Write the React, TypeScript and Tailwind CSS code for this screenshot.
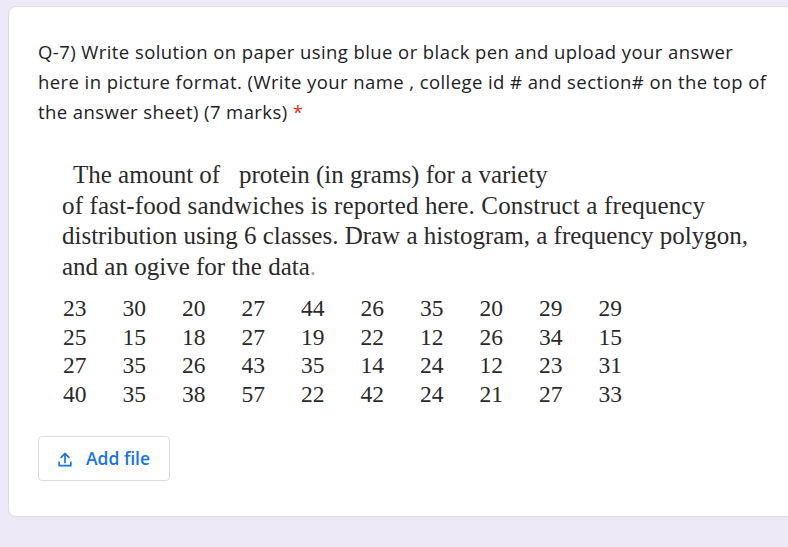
import React from "react";

const rows = [
  [23, 30, 20, 27, 44, 26, 35, 20, 29, 29],
  [25, 15, 18, 27, 19, 22, 12, 26, 34, 15],
  [27, 35, 26, 43, 35, 14, 24, 12, 23, 31],
  [40, 35, 38, 57, 22, 42, 24, 21, 27, 33],
];

export default function App() {
  return (
    <div className="w-[788px] h-[547px] bg-[#ede9f7] overflow-hidden pt-[6px] pl-[8px]">
      <div className="w-[800px] h-[511px] bg-white rounded-l-[8px] border border-[#dadce0] pl-[29px] pt-[30px]">
        <div
          className="text-[18.5px] leading-[30px] tracking-[0.42px] text-[#202124] whitespace-nowrap"
          style={{ fontFamily: "'Open Sans', Roboto, sans-serif" }}
        >
          <div>Q-7) Write solution on paper using blue or black pen and upload your answer</div>
          <div>here in picture format. (Write your name , college id # and section# on the top of</div>
          <div>
            the answer sheet) (7 marks) <span className="text-[#d93025]">*</span>
          </div>
        </div>
        <div
          className="mt-[33px] pl-[24px] text-[#2a2a2a] text-[25px] leading-[30.5px]"
          style={{ fontFamily: "'Liberation Serif', 'Times New Roman', serif" }}
        >
          <div className="pl-[11px] whitespace-pre">The amount of   protein (in grams) for a variety</div>
          <div className="whitespace-nowrap tracking-[0.15px]">of fast-food sandwiches is reported here. Construct a frequency</div>
          <div className="whitespace-nowrap">distribution using 6 classes. Draw a histogram, a frequency polygon,</div>
          <div>and an ogive for the data<span className="text-[#9a9a9a]">.</span></div>
          <div className="mt-[12px] grid grid-cols-[repeat(10,59.5px)] leading-[28.5px] text-[23.5px]">
            {rows.flat().map((n, i) => (
              <div key={i} className="pl-[1px]">{n}</div>
            ))}
          </div>
        </div>
        <button
          className="mt-[28px] h-[45px] w-[132px] border border-[#dadce0] rounded-[4px] flex items-center pl-[16px] gap-[11px] text-[#1a73e8] text-[17.5px] font-semibold"
          style={{ fontFamily: "'Open Sans', Roboto, sans-serif" }}
        >
          <svg width="20" height="20" viewBox="0 0 24 24" fill="#1a73e8">
            <path d="M4 21h16v-2H4z M18 15v5h2v-5z M4 15v5h2v-5z" />
            <path d="M11 17h2V7.83l3.59 3.58L18 10l-6-6-6 6 1.41 1.41L11 7.83z" />
          </svg>
          <span>Add file</span>
        </button>
      </div>
    </div>
  );
}
